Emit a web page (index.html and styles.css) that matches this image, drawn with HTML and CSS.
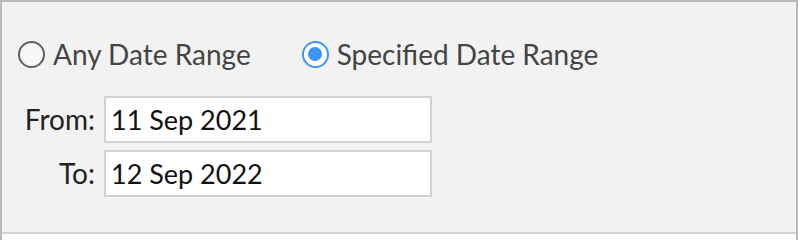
FILE: index.html
```html
<!DOCTYPE html>
<html>
<head>
<meta charset="utf-8">
<link rel="stylesheet" href="styles.css">
</head>
<body>
<div class="frame">
  <div class="panel">
    <div class="radios">
      <label class="radio">
        <span class="circle"></span>
        <span class="rtext">Any Date Range</span>
      </label>
      <label class="radio checked">
        <span class="circle"><span class="dot"></span></span>
        <span class="rtext">Specified Date Range</span>
      </label>
    </div>
    <div class="fields">
      <div class="lbl">From:</div>
      <div class="box">11 Sep 2021</div>
      <div class="lbl">To:</div>
      <div class="box">12 Sep 2022</div>
    </div>
  </div>
</div>
</body>
</html>
```
FILE: styles.css
```css
html, body {
  margin: 0;
  padding: 0;
  background: #ffffff;
}
.frame {
  width: 798px;
  height: 240px;
  box-sizing: border-box;
  border: 2px solid #b9b9b9;
  border-bottom: none;
  background: #ffffff;
  font-family: Lato, "Open Sans", sans-serif;
}
.panel {
  height: 232px;
  box-sizing: border-box;
  background: #f2f2f2;
  border-bottom: 2px solid #d2d2d2;
  padding-top: 37px;
}
.radios {
  display: flex;
  align-items: center;
  height: 30px;
  padding-left: 16px;
}
.radio {
  display: flex;
  align-items: center;
  gap: 8px;
  color: #444444;
  font-size: 28px;
  margin-right: 51px;
}
.circle {
  width: 27px;
  height: 27px;
  box-sizing: border-box;
  border: 2px solid #5f5f5f;
  border-radius: 50%;
  display: flex;
  align-items: center;
  justify-content: center;
  background: #f7f7f7;
}
.checked .circle {
  border: 2px solid #3d96f4;
  background: #ffffff;
}
.dot {
  width: 14px;
  height: 14px;
  border-radius: 50%;
  background: #3d96f4;
}
.rtext {
  line-height: 30px;
}
.fields {
  display: grid;
  grid-template-columns: 93px 328px;
  column-gap: 9px;
  row-gap: 7px;
  margin-top: 27px;
}
.lbl {
  text-align: right;
  font-size: 28px;
  color: #222222;
  line-height: 47px;
}
.box {
  height: 47px;
  box-sizing: border-box;
  border: 2px solid #d3d3d3;
  background: #ffffff;
  font-size: 27px;
  color: #111111;
  line-height: 43px;
  padding-left: 5px;
}
```
